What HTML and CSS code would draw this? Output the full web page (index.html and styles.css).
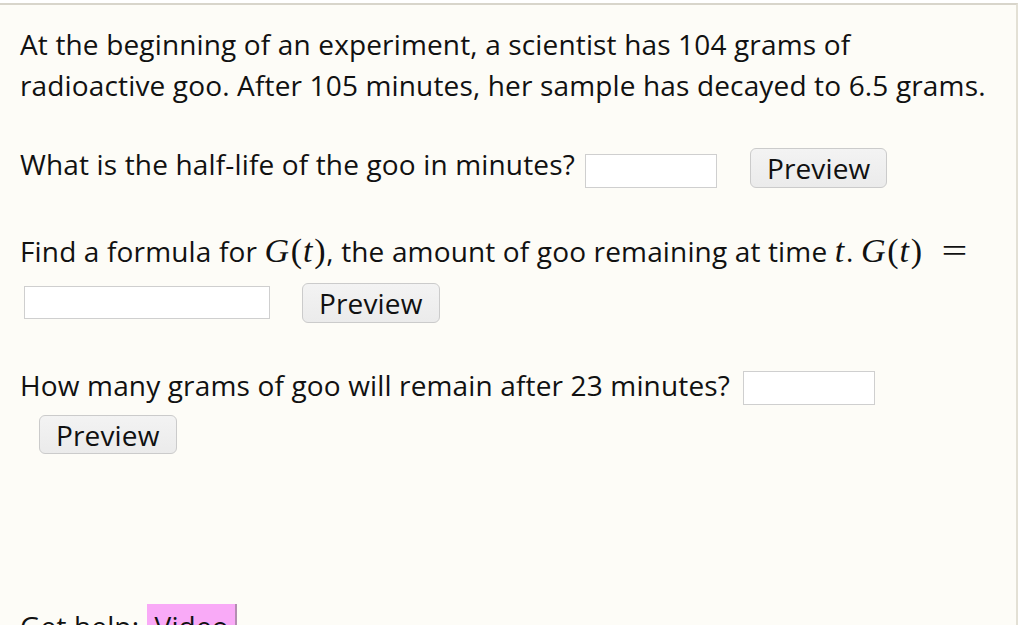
FILE: index.html
```html
<!DOCTYPE html>
<html>
<head>
<meta charset="utf-8">
<link rel="stylesheet" href="styles.css">
</head>
<body>
<div class="frame">
  <p class="intro">At the beginning of an experiment, a scientist has 104 grams of<br>radioactive goo. After 105 minutes, her sample has decayed to 6.5 grams.</p>

  <div class="row row-q1">
    <span class="txt">What is the half-life of the goo in minutes?</span>
    <input class="ans ans-short" type="text">
    <button class="preview btn-q1">Preview</button>
  </div>

  <p class="line q2">Find a formula for <span class="math"><i>G</i>(<i>t</i>)</span>, the amount of goo remaining at time <span class="math"><i>t</i></span>. <span class="math"><i>G</i>(<i>t</i>)<span class="eq">=</span></span></p>
  <div class="row row-q2b">
    <input class="ans ans-long" type="text">
    <button class="preview btn-q2">Preview</button>
  </div>

  <div class="row row-q3">
    <span class="txt">How many grams of goo will remain after 23 minutes?</span>
    <input class="ans ans-short q3-input" type="text">
  </div>
  <div class="row row-q3b">
    <button class="preview">Preview</button>
  </div>

  <p class="line help">Get help: <span class="video">Video</span></p>
</div>
</body>
</html>
```

FILE: styles.css
```css
html, body {
  margin: 0;
  padding: 0;
  background: #ffffff;
}

body {
  font-family: "Open Sans", "Liberation Sans", sans-serif;
  color: #111111;
  overflow: hidden;
}

.frame {
  margin-top: 3px;
  width: 1018px;
  height: 622px;
  box-sizing: border-box;
  border-top: 2px solid #d8d5cb;
  border-right: 2px solid #e3e0d5;
  background: #fdfcf7;
  padding: 19px 0 0 20px;
  overflow: hidden;
}

.intro, .line {
  margin: 0;
  font-size: 28px;
  line-height: 41px;
  letter-spacing: 0.15px;
  white-space: nowrap;
}

.row {
  display: flex;
  font-size: 28px;
}

.txt {
  line-height: 41px;
  letter-spacing: 0.15px;
  white-space: nowrap;
}

.preview {
  box-sizing: border-box;
  height: 40px;
  padding: 0 16px;
  margin: 0;
  font-family: "Open Sans", "Liberation Sans", sans-serif;
  font-size: 28px;
  line-height: 1;
  letter-spacing: 0.15px;
  color: #111111;
  background: linear-gradient(#f3f3f3, #ebebeb);
  border: 1.5px solid #cbcbcb;
  border-radius: 6px;
}

.ans {
  box-sizing: border-box;
  height: 34px;
  border: 1px solid #cfcfcf;
  background: #ffffff;
  padding: 0;
  margin: 0;
  outline: none;
}

.row-q1 {
  margin-top: 42px;
  align-items: flex-end;
  height: 40px;
}

.row-q1 .txt {
  margin-bottom: 3px;
}

.ans-short {
  width: 132px;
  margin-left: 10px;
}

.row-q1 .btn-q1 {
  margin-left: 33px;
}

.q2 {
  margin-top: 42px;
}

.math {
  font-family: "Liberation Serif", "DejaVu Serif", serif;
  font-size: 34px;
  letter-spacing: 0.8px;
}

.math i {
  font-style: italic;
  padding-right: 1px;
}

.eq {
  display: inline-block;
  margin-left: 22px;
  font-style: normal;
  transform: scaleX(1.35);
}

.row-q2b {
  margin-top: 10px;
  height: 41px;
  align-items: center;
  margin-left: 4px;
}

.ans-long {
  width: 246px;
  height: 33px;
}

.row-q2b .btn-q2 {
  margin-left: 32px;
}

.row-q3 {
  margin-top: 42px;
  align-items: center;
}

.q3-input {
  margin-left: 13px;
  margin-top: 4px;
}

.row-q3b {
  margin-top: 9px;
  margin-left: 19px;
}

.row-q3b .preview {
  height: 39px;
}

.help {
  margin-top: 150px;
}

.video {
  display: inline-block;
  background: #f9aaf7;
  border-right: 2px solid #b48db2;
  padding: 0 6px 0 8px;
  line-height: 44px;
}
```
